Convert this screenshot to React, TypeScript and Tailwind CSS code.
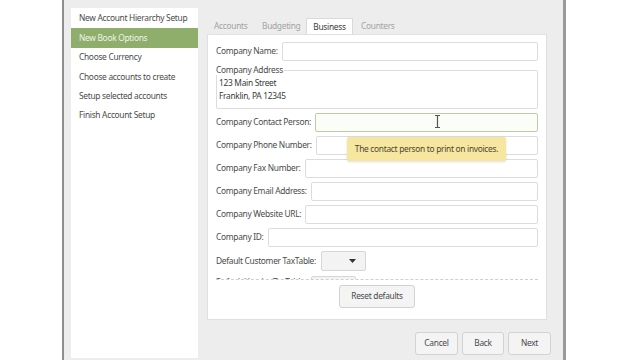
const steps = [
  "New Account Hierarchy Setup",
  "New Book Options",
  "Choose Currency",
  "Choose accounts to create",
  "Setup selected accounts",
  "Finish Account Setup",
];

function Row({ label, focused }: { label: string; focused?: boolean }) {
  return (
    <div className="flex items-center h-[19px]">
      <span className="pr-[4px] whitespace-nowrap">{label}</span>
      <div
        className={
          "flex-1 h-[19px] rounded-[2px] border " +
          (focused ? "border-[#b9cfa2] bg-[#fbfdf8]" : "border-[#dcdcdc] bg-white")
        }
      />
    </div>
  );
}

function Combo({ label, className = "" }: { label: string; className?: string }) {
  return (
    <div className={"flex items-center h-[20px] " + className}>
      <span className="pr-[5px] whitespace-nowrap">{label}</span>
      <div className="w-[45px] h-[20px] rounded-[2px] border border-[#d6d6d6] bg-[#f3f3f3] flex items-center justify-end pr-[9px]">
        <svg width="7" height="4" viewBox="0 0 7 4">
          <path d="M0 0h7L3.5 4z" fill="#333" />
        </svg>
      </div>
    </div>
  );
}

function Button({ children, w }: { children: string; w: string }) {
  return (
    <button className={"h-[23px] rounded-[3px] border border-[#d2d2d2] bg-[#f4f4f4] text-[#4a4a4a] " + w}>
      {children}
    </button>
  );
}

export default function App() {
  return (
    <div
      className="w-[640px] h-[360px] flex bg-white overflow-hidden text-[8.4px] tracking-[-0.3px] text-[#4b4b4b] whitespace-nowrap"
      style={{ fontFamily: '"Noto Sans", "Open Sans", sans-serif' }}
    >
      <div className="w-[62px]" />
      <div className="w-[2px] bg-[#8e8e8e]" />
      <div className="w-[499px] bg-[#ededed] flex pl-[7px] pt-[8px]">
        {/* sidebar */}
        <div className="w-[127px] h-[350px] bg-white flex flex-col pt-[1px]">
          {steps.map((s, i) => (
            <div
              key={s}
              className={
                "h-[19.4px] flex items-center pl-[8px] " +
                (i === 1 ? "bg-[#8fae6c] text-[#eef3e8]" : "")
              }
            >
              {s}
            </div>
          ))}
        </div>

        {/* main */}
        <div className="ml-[9px] w-[344px] flex flex-col">
          <div className="flex h-[17px] mt-[9px] pl-[7px] items-end text-[#a3a3a3]">
            <div className="w-[48px] h-[16px] flex items-center">Accounts</div>
            <div className="w-[44px] h-[16px] flex items-center">Budgeting</div>
            <div className="w-[47px] h-[17px] flex items-center justify-center bg-white border border-b-0 border-[#dadada] text-[#3c3c3c] relative top-[1px]">
              Business
            </div>
            <div className="h-[16px] flex items-center ml-[8px]">Counters</div>
          </div>
          <div className="w-[340px] h-[286px] bg-white border border-[#e0e0e0] relative flex flex-col px-[8px] pt-[7px]">
            <div className="h-[238px] overflow-hidden flex flex-col gap-[4px] border-b border-dashed border-[#cfcfcf]">
              <Row label="Company Name:" />
              <div className="flex flex-col h-[44px]">
                <div className="flex h-[10px]">
                  <span className="leading-[10px] pr-[1px]">Company Address</span>
                  <div className="flex-1 self-end h-[5px] border-t border-r border-[#dcdcdc] rounded-tr-[2px]" />
                </div>
                <div className="h-[34px] border-l border-r border-b border-[#dcdcdc] rounded-b-[2px] pl-[2px] pt-[1px] leading-[13px] text-[#3a3a3a]">
                  <div>123 Main Street</div>
                  <div>Franklin, PA 12345</div>
                </div>
              </div>
              <Row label="Company Contact Person:" focused />
              <Row label="Company Phone Number:" />
              <Row label="Company Fax Number:" />
              <Row label="Company Email Address:" />
              <Row label="Company Website URL:" />
              <Row label="Company ID:" />
              <Combo label="Default Customer TaxTable:" />
              <Combo label="Default Vendor TaxTable:" className="-mt-[1px] items-start pt-[2px]" />
            </div>
            <div className="flex justify-center mt-[5px]">
              <Button w="w-[76px]">Reset defaults</Button>
            </div>

            {/* text cursor */}
            <svg className="absolute left-[227px] top-[80px]" width="5" height="13" viewBox="0 0 5 13">
              <path d="M0 0.5h5M0 12.5h5M2.5 0.5v12" stroke="#555" strokeWidth="1.2" fill="none" />
            </svg>

            {/* tooltip */}
            <div className="absolute left-[139px] top-[102px] w-[159px] h-[24px] bg-[#f6e6a0] rounded-[2px] flex items-center justify-center text-[#4d4632] shadow-sm">
              The contact person to print on invoices.
            </div>
          </div>
          <div className="flex justify-end gap-[4px] mt-[12px]">
            <Button w="w-[43px]">Cancel</Button>
            <Button w="w-[42px]">Back</Button>
            <Button w="w-[43px]">Next</Button>
          </div>
        </div>
      </div>
      <div className="w-[3px] bg-[#9a9a9a]" />
      <div className="flex-1" />
    </div>
  );
}
